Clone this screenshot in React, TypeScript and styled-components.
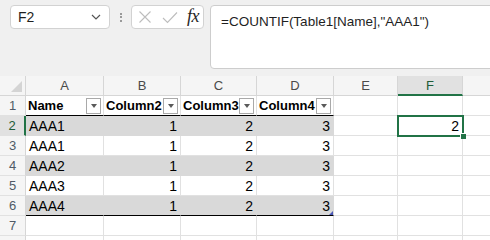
import React from 'react'
import styled, { createGlobalStyle } from 'styled-components'

const GlobalStyle = createGlobalStyle`
  html, body {
    margin: 0;
    padding: 0;
    background: #fff;
  }
  body {
    font-family: "Liberation Sans", Arial, sans-serif;
  }
`

const GREEN = '#217346'

const Window = styled.div`
  width: 490px;
  height: 240px;
  overflow: hidden;
  background: #fff;
`

// ---- formula bar ----
const FormulaBar = styled.div`
  height: 76px;
  box-sizing: border-box;
  background: #f0f0f0;
  display: flex;
  align-items: flex-start;
  padding: 5px 0 0 10px;
`

const Box = styled.div`
  height: 24px;
  box-sizing: border-box;
  border: 1px solid #d2d2d2;
  border-radius: 4px;
  background: #fff;
  display: flex;
  align-items: center;
`

const NameBox = styled(Box)`
  width: 100px;
  justify-content: space-between;
  padding: 0 8px 0 7px;
  font-size: 14px;
  color: #1f1f1f;
`

const Grip = styled.div`
  width: 21px;
  height: 24px;
  display: flex;
  flex-direction: column;
  align-items: center;
  justify-content: center;
  gap: 1.5px;
  span {
    width: 2px;
    height: 2px;
    background: #9a9a9a;
  }
`

const ButtonGroup = styled(Box)`
  width: 73px;
  padding: 0 4px 0 6px;
  justify-content: space-between;
`

const Fx = styled.span`
  font-family: "Liberation Serif", "Times New Roman", serif;
  font-style: italic;
  font-size: 18px;
  color: #262626;
  letter-spacing: -0.5px;
  padding-bottom: 2px;
`

const FormulaInput = styled.div`
  flex: 1;
  margin-left: 6px;
  margin-right: -10px;
  height: 64px;
  box-sizing: border-box;
  border: 1px solid #cdcdcd;
  border-radius: 4px;
  background: #fff;
  padding: 7px 10px;
  font-size: 13.5px;
  line-height: 18px;
  color: #1f1f1f;
`

// ---- sheet ----
const Sheet = styled.div`
  display: grid;
  width: 527px;
  grid-template-columns: 26px 78px 77px 76px 77px 64px 65px 64px;
  grid-auto-rows: 20px;
`

const Corner = styled.div`
  box-sizing: border-box;
  background: #f5f5f5;
  border-right: 1px solid #d6d6d6;
  border-bottom: 1px solid #d6d6d6;
  display: flex;
  align-items: flex-end;
  justify-content: flex-end;
  padding: 0 3px 3px 0;
  &::after {
    content: '';
    border-left: 11px solid transparent;
    border-bottom: 11px solid #d4d4d4;
  }
`

const ColHead = styled.div<{ $selected?: boolean }>`
  box-sizing: border-box;
  background: ${p => (p.$selected ? '#e1e1e1' : '#f5f5f5')};
  border-right: 1px solid #d6d6d6;
  border-bottom: ${p => (p.$selected ? `2px solid ${GREEN}` : '1px solid #d6d6d6')};
  display: flex;
  align-items: center;
  justify-content: center;
  font-size: 13px;
  color: ${p => (p.$selected ? '#1d5c38' : '#4a4a4a')};
`

const RowHead = styled.div<{ $selected?: boolean }>`
  box-sizing: border-box;
  background: ${p => (p.$selected ? '#e1e1e1' : '#f5f5f5')};
  border-right: ${p => (p.$selected ? `2px solid ${GREEN}` : '1px solid #d6d6d6')};
  border-bottom: 1px solid #e1e1e1;
  display: flex;
  align-items: center;
  justify-content: center;
  font-size: 13px;
  color: ${p => (p.$selected ? '#1d5c38' : '#4f5a66')};
`

const Cell = styled.div<{
  $band?: boolean
  $num?: boolean
  $bold?: boolean
  $rule?: boolean
  $active?: boolean
  $resize?: boolean
}>`
  position: relative;
  box-sizing: border-box;
  background: ${p => (p.$band ? '#d9d9d9' : '#fff')};
  border-right: 1px solid ${p => (p.$band ? '#d9d9d9' : '#e1e1e1')};
  border-bottom: 1px solid ${p => (p.$rule ? '#000' : p.$band ? '#d9d9d9' : '#e1e1e1')};
  display: flex;
  align-items: center;
  justify-content: ${p => (p.$num ? 'flex-end' : 'space-between')};
  padding: ${p => (p.$bold ? '0 2px 0 2px' : '0 3px 0 3px')};
  font-size: ${p => (p.$bold ? '13px' : '14px')};
  font-weight: ${p => (p.$bold ? 700 : 400)};
  color: #000;
  white-space: nowrap;
  ${p =>
    p.$active &&
    `
    z-index: 2;
    outline: 2px solid ${GREEN};
    outline-offset: -1px;
    &::after {
      content: '';
      position: absolute;
      right: -4px;
      bottom: -4px;
      width: 5px;
      height: 5px;
      background: ${GREEN};
      border-left: 1px solid #fff;
      border-top: 1px solid #fff;
    }
  `}
  ${p =>
    p.$resize &&
    `
    &::after {
      content: '';
      position: absolute;
      right: 0;
      bottom: 0;
      border-left: 4px solid transparent;
      border-bottom: 4px solid #4a58b8;
    }
  `}
`

const FilterButton = styled.span`
  flex: none;
  width: 15px;
  height: 16px;
  box-sizing: border-box;
  border: 1px solid #a9a9a9;
  background: #fff;
  display: flex;
  align-items: center;
  justify-content: center;
  &::after {
    content: '';
    border-left: 3.5px solid transparent;
    border-right: 3.5px solid transparent;
    border-top: 4px solid #5a5a5a;
  }
`

// G only peeks in at the right edge, its letter falls outside the window
const columns = ['A', 'B', 'C', 'D', 'E', 'F', '']
const header = ['Name', 'Column2', 'Column3', 'Column4']
const data: [string, number, number, number][] = [
  ['AAA1', 1, 2, 3],
  ['AAA1', 1, 2, 3],
  ['AAA2', 1, 2, 3],
  ['AAA3', 1, 2, 3],
  ['AAA4', 1, 2, 3],
]

const Chevron = () => (
  <svg width="10" height="6" viewBox="0 0 10 6" fill="none">
    <path d="M1 1l4 4 4-4" stroke="#555" strokeWidth="1.2" />
  </svg>
)

const Cross = () => (
  <svg width="14" height="14" viewBox="0 0 14 14" fill="none">
    <path d="M1.5 1.5l11 11M12.5 1.5l-11 11" stroke="#bdbdbd" strokeWidth="1.1" />
  </svg>
)

const Check = () => (
  <svg width="16" height="13" viewBox="0 0 16 13" fill="none">
    <path d="M1 7l4.5 4.5L15 1.5" stroke="#bdbdbd" strokeWidth="1.1" />
  </svg>
)

const App = () => {
  const totalRows = 8
  const cells: React.ReactNode[] = []

  cells.push(<Corner key="corner" />)
  columns.forEach((c, i) =>
    cells.push(
      <ColHead key={'h' + i} $selected={c === 'F'}>
        {c}
      </ColHead>
    )
  )

  for (let r = 1; r <= totalRows; r++) {
    // the last row is only a sliver at the window's bottom edge
    cells.push(
      <RowHead key={'r' + r} $selected={r === 2}>
        {r < totalRows ? r : ''}
      </RowHead>
    )
    for (let ci = 0; ci < columns.length; ci++) {
      const key = ci + '-' + r
      if (ci < 4 && r === 1) {
        cells.push(
          <Cell key={key} $bold $rule>
            {header[ci]}
            <FilterButton />
          </Cell>
        )
      } else if (ci < 4 && r >= 2 && r <= 6) {
        const row = data[r - 2]
        cells.push(
          <Cell
            key={key}
            $band={r % 2 === 0}
            $num={ci > 0}
            $rule={r === 6}
            $resize={r === 6 && ci === 3}
          >
            {row[ci]}
          </Cell>
        )
      } else if (columns[ci] === 'F' && r === 2) {
        cells.push(
          <Cell key={key} $num $active>
            2
          </Cell>
        )
      } else {
        cells.push(<Cell key={key} />)
      }
    }
  }

  return (
    <>
      <GlobalStyle />
      <Window>
        <FormulaBar>
          <NameBox>
            F2
            <Chevron />
          </NameBox>
          <Grip>
            <span />
            <span />
            <span />
          </Grip>
          <ButtonGroup>
            <Cross />
            <Check />
            <Fx>fx</Fx>
          </ButtonGroup>
          <FormulaInput>=COUNTIF(Table1[Name],"AAA1")</FormulaInput>
        </FormulaBar>
        <Sheet>{cells}</Sheet>
      </Window>
    </>
  )
}

export default App
